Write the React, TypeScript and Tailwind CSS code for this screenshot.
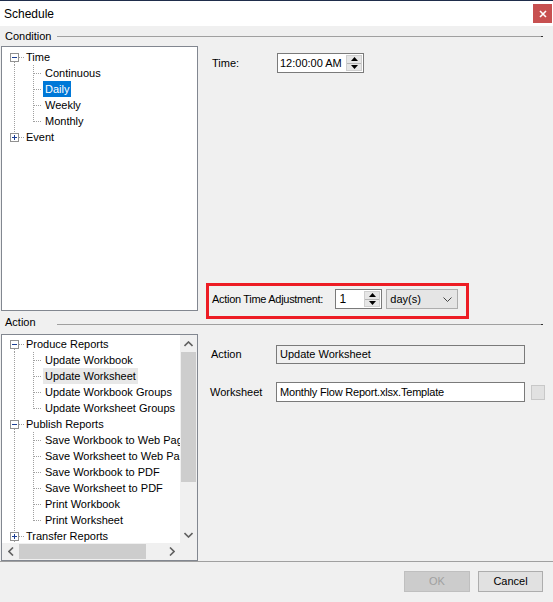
import React from 'react';

type Node = {
  label: string;
  level: 0 | 1;
  sign?: '+' | '-';
  first?: boolean;
  more?: boolean;
  last?: boolean;
  sel?: 'blue' | 'gray';
};

const conditionTree: Node[] = [
  { label: 'Time', level: 0, sign: '-', first: true, more: true },
  { label: 'Continuous', level: 1, more: true },
  { label: 'Daily', level: 1, more: true, sel: 'blue' },
  { label: 'Weekly', level: 1, more: true },
  { label: 'Monthly', level: 1, more: true, last: true },
  { label: 'Event', level: 0, sign: '+', more: false },
];

const actionTree: Node[] = [
  { label: 'Produce Reports', level: 0, sign: '-', first: true, more: true },
  { label: 'Update Workbook', level: 1, more: true },
  { label: 'Update Worksheet', level: 1, more: true, sel: 'gray' },
  { label: 'Update Workbook Groups', level: 1, more: true },
  { label: 'Update Worksheet Groups', level: 1, more: true, last: true },
  { label: 'Publish Reports', level: 0, sign: '-', more: true },
  { label: 'Save Workbook to Web Page', level: 1, more: true },
  { label: 'Save Worksheet to Web Page', level: 1, more: true },
  { label: 'Save Workbook to PDF', level: 1, more: true },
  { label: 'Save Worksheet to PDF', level: 1, more: true },
  { label: 'Print Workbook', level: 1, more: true },
  { label: 'Print Worksheet', level: 1, more: true, last: true },
  { label: 'Transfer Reports', level: 0, sign: '+', more: true },
];

const dot = { stroke: '#a0a0a0', strokeDasharray: '1 1', shapeRendering: 'crispEdges' as const };

const TreeRow: React.FC<{ node: Node }> = ({ node }) => {
  if (node.level === 0) {
    return (
      <div className="flex h-[16px] items-center whitespace-nowrap">
        <svg width="22" height="16" className="shrink-0">
          {!node.first && <line x1="12.5" y1="0" x2="12.5" y2="4" {...dot} />}
          {node.more && <line x1="12.5" y1="13" x2="12.5" y2="16" {...dot} />}
          <line x1="17" y1="8.5" x2="22" y2="8.5" {...dot} />
          <rect x="8.5" y="4.5" width="8" height="8" fill="#fff" stroke="#919191" shapeRendering="crispEdges" />
          <line x1="10" y1="8.5" x2="15" y2="8.5" stroke="#1c3f94" shapeRendering="crispEdges" />
          {node.sign === '+' && (
            <line x1="12.5" y1="6" x2="12.5" y2="11" stroke="#1c3f94" shapeRendering="crispEdges" />
          )}
        </svg>
        <span className="px-[2px] leading-[16px]">{node.label}</span>
      </div>
    );
  }
  return (
    <div className="flex h-[16px] items-center whitespace-nowrap">
      <svg width="41" height="16" className="shrink-0">
        {node.more && <line x1="12.5" y1="0" x2="12.5" y2="16" {...dot} />}
        <line x1="31.5" y1="0" x2="31.5" y2={node.last ? 9 : 16} {...dot} />
        <line x1="32" y1="8.5" x2="40" y2="8.5" {...dot} />
      </svg>
      <span
        className={`px-[2px] leading-[16px] ${
          node.sel === 'blue' ? 'bg-[#0078d7] text-white' : node.sel === 'gray' ? 'bg-[#e8e8e8]' : ''
        }`}
      >
        {node.label}
      </span>
    </div>
  );
};

const Spinner: React.FC = () => (
  <div className="flex h-[16px] w-[16px] shrink-0 flex-col border border-[#cfcfcf] bg-[#e6e6e6]">
    <div className="flex flex-1 items-center justify-center border-b border-[#b5b5b5]">
      <svg width="7" height="4">
        <path d="M0 4 L3.5 0 L7 4 Z" fill="#000" />
      </svg>
    </div>
    <div className="flex flex-1 items-center justify-center">
      <svg width="7" height="4">
        <path d="M0 0 L3.5 4 L7 0 Z" fill="#000" />
      </svg>
    </div>
  </div>
);

const SectionHeader: React.FC<{ label: string; h: string; lineOffset: string }> = ({ label, h, lineOffset }) => (
  <div className={`flex ${h} items-center`}>
    <span className="ml-[5px] w-[52px]">{label}</span>
    <div className={`h-px w-[484px] bg-[#a0a0a0] ${lineOffset}`} />
    <div className={`h-px w-[2px] bg-[#333] ${lineOffset}`} />
  </div>
);

const App: React.FC = () => {
  return (
    <div
      className="h-[602px] w-[553px] overflow-hidden bg-[#f0f0f0] text-[11px] text-black"
      style={{ fontFamily: '"Liberation Sans", Arial, sans-serif' }}
    >
      {/* Title bar */}
      <div className="flex h-[26px] items-center justify-between border-t border-[#1f2d4b] bg-white">
        <span className="ml-[4px] text-[12px]">Schedule</span>
        <div className="mr-[1px] flex h-[19px] w-[19px] items-center justify-center bg-[#c75050]">
          <svg width="8" height="8">
            <path d="M1 1 L7 7 M7 1 L1 7" stroke="#fff" strokeWidth="1.6" />
          </svg>
        </div>
      </div>

      <SectionHeader label="Condition" h="h-[20px]" lineOffset="mt-[1px]" />

      {/* Condition */}
      <div className="flex h-[265px]">
        <div className="ml-[1px] h-full w-[197px] border border-[#828790] bg-white pt-[2px]">
          {conditionTree.map((n) => (
            <TreeRow key={n.label} node={n} />
          ))}
        </div>
        <div className="flex flex-1 flex-col">
          <div className="mt-[7px] flex items-center">
            <span className="ml-[14px] w-[65px]">Time:</span>
            <div className="flex h-[20px] w-[87px] items-center justify-between border border-[#7a7a7a] bg-white pl-[2px] pr-[1px]">
              <span className="whitespace-nowrap">12:00:00 AM</span>
              <Spinner />
            </div>
          </div>
          <div className="flex-1" />
          <div className="relative mb-[2px] ml-[14px] flex w-[246px] items-center">
            <span className="w-[124px] whitespace-nowrap tracking-[-0.3px]">Action Time Adjustment:</span>
            <div className="flex h-[20px] w-[47px] items-center justify-between border border-[#7a7a7a] bg-white pl-[3px] pr-[1px]">
              <span className="text-[12px]">1</span>
              <Spinner />
            </div>
            <div className="ml-[4px] flex h-[20px] w-[72px] items-center justify-between border border-[#adadad] bg-[#e5e5e5] pl-[3px] pr-[5px]">
              <span>day(s)</span>
              <svg width="9" height="5">
                <path d="M0.5 0.5 L4.5 4.5 L8.5 0.5" stroke="#444" fill="none" />
              </svg>
            </div>
            <div className="pointer-events-none absolute -bottom-[10px] -left-[6px] -right-[11px] -top-[6px] border-[3px] border-[#ed1c24]" />
          </div>
        </div>
      </div>

      <SectionHeader label="Action" h="h-[23px]" lineOffset="mt-[3px]" />

      {/* Action */}
      <div className="flex h-[227px]">
        <div className="ml-[1px] flex h-full w-[197px] flex-col border border-[#828790] bg-white">
          <div className="flex min-h-0 flex-1">
            <div className="min-w-0 flex-1 overflow-hidden pt-[1px]">
              {actionTree.map((n) => (
                <TreeRow key={n.label} node={n} />
              ))}
            </div>
            <div className="flex w-[17px] flex-col bg-[#f0f0f0]">
              <div className="flex h-[17px] items-center justify-center">
                <svg width="9" height="6">
                  <path d="M0.5 5 L4.5 1 L8.5 5" stroke="#606060" strokeWidth="1.6" fill="none" />
                </svg>
              </div>
              <div className="mx-[1px] h-[130px] bg-[#cdcdcd]" />
              <div className="flex-1" />
              <div className="flex h-[17px] items-center justify-center">
                <svg width="9" height="6">
                  <path d="M0.5 1 L4.5 5 L8.5 1" stroke="#606060" strokeWidth="1.6" fill="none" />
                </svg>
              </div>
            </div>
          </div>
          <div className="flex h-[17px] bg-[#f0f0f0]">
            <div className="flex w-[17px] items-center justify-center">
              <svg width="6" height="9">
                <path d="M5 0.5 L1 4.5 L5 8.5" stroke="#606060" strokeWidth="1.6" fill="none" />
              </svg>
            </div>
            <div className="my-[1px] w-[127px] bg-[#cdcdcd]" />
            <div className="flex-1" />
            <div className="flex w-[17px] items-center justify-center">
              <svg width="6" height="9">
                <path d="M1 0.5 L5 4.5 L1 8.5" stroke="#606060" strokeWidth="1.6" fill="none" />
              </svg>
            </div>
            <div className="w-[17px]" />
          </div>
        </div>
        <div className="flex flex-1 flex-col pt-[11px]">
          <div className="flex items-center">
            <span className="ml-[13px] w-[65px]">Action</span>
            <div className="flex h-[19px] w-[249px] items-center border border-[#7a7a7a] bg-[#f0f0f0] pl-[3px]">
              <span>Update Worksheet</span>
            </div>
          </div>
          <div className="mt-[18px] flex items-center">
            <span className="ml-[12px] w-[66px]">Worksheet</span>
            <div className="flex h-[20px] w-[249px] items-center border border-[#7a7a7a] bg-white pl-[3px]">
              <span className="whitespace-nowrap tracking-[-0.2px]">Monthly Flow Report.xlsx.Template</span>
            </div>
            <div className="ml-[6px] h-[15px] w-[14px] border border-[#c8c8c8] bg-[#e1e1e1]" />
          </div>
        </div>
      </div>

      {/* Footer */}
      <div className="flex justify-end gap-[8px] border-t border-[#a0a0a0] pr-[10px] pt-[9px]">
        <div className="flex h-[21px] w-[66px] items-center justify-center border border-[#bfbfbf] bg-[#cccccc] text-[#a0a0a0]">
          OK
        </div>
        <div className="flex h-[21px] w-[65px] items-center justify-center border border-[#adadad] bg-[#e1e1e1]">
          Cancel
        </div>
      </div>
    </div>
  );
};

export default App;
